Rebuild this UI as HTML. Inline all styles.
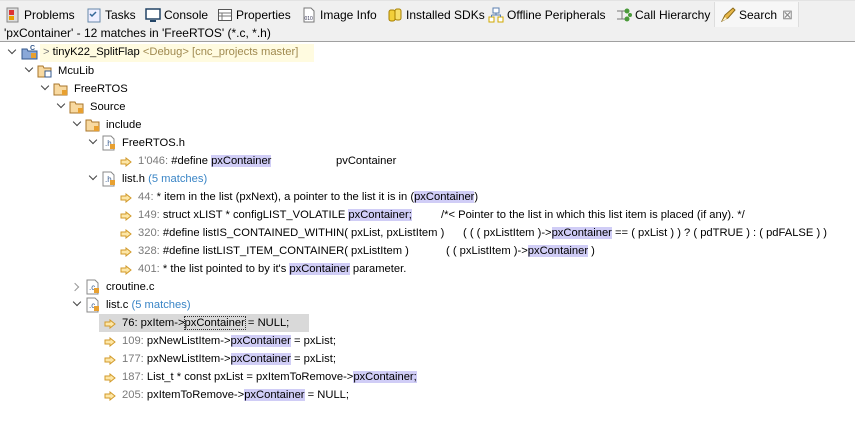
<!DOCTYPE html>
<html><head><meta charset="utf-8"><style>
*{margin:0;padding:0;box-sizing:border-box}
body{width:855px;height:426px;overflow:hidden;background:#fff;font-family:"Liberation Sans",sans-serif;font-size:12px;color:#000;position:relative}
.tabs{position:absolute;left:0;top:0;width:855px;height:28px;background:#f0f0f0;border-top:1px solid #e3e3e3}
.tab{position:absolute;top:5px;height:18px;line-height:18px;white-space:nowrap}
.tab svg{position:absolute;left:0;top:1px}
.tab span{position:absolute;left:19px}
.sel{position:absolute;left:714px;top:1px;width:85px;height:27px;background:#f7f7f7;border-left:1px solid #ddd;border-right:1px solid #ddd}
.status{position:absolute;left:0;top:27px;width:855px;height:15px;background:#f0f0f0;border-bottom:1px solid #a0a0a0;line-height:13px;padding-left:4px}
.r{position:absolute;height:18px;line-height:18px;white-space:nowrap;font-size:11.2px}
.t{position:absolute;white-space:nowrap;top:0}
.h{background:#d0cdf6}
.g{color:#7a7a7a}
.b{color:#3a85c6}
.chev{position:absolute;width:6px;height:6px;border-right:1.3px solid #444;border-bottom:1.3px solid #444}
.dn{transform:rotate(45deg)}
.rt{transform:rotate(-45deg);border-color:#999}
</style></head><body>
<div class="tabs">
<div class="sel"></div>
<div class="tab" style="left:5px"><svg width="16" height="16"><rect x="2" y="1" width="11" height="14" fill="#ddd" stroke="#888"/><rect x="4" y="3" width="5" height="5" fill="#d33"/><rect x="4" y="9" width="5" height="4" fill="#e8a000"/></svg><span>Problems</span></div>
<div class="tab" style="left:86px"><svg width="16" height="16"><rect x="2" y="2" width="12" height="13" fill="#eef" stroke="#68a"/><path d="M4 7l2 2 4-4" stroke="#369" fill="none" stroke-width="1.5"/></svg><span>Tasks</span></div>
<div class="tab" style="left:145px"><svg width="16" height="16"><rect x="1" y="2" width="14" height="10" fill="#fff" stroke="#246" stroke-width="1.5"/><rect x="5" y="13" width="6" height="2" fill="#246"/></svg><span>Console</span></div>
<div class="tab" style="left:217px"><svg width="16" height="16"><rect x="1.5" y="2.5" width="13" height="11" fill="#fff" stroke="#555"/><path d="M2 6h12M2 9h12M5 6v7" stroke="#777"/></svg><span>Properties</span></div>
<div class="tab" style="left:301px"><svg width="16" height="16"><path d="M3 1h7l3 3v11H3z" fill="#fff" stroke="#777"/><text x="3.5" y="13" font-size="5" fill="#335">010</text></svg><span>Image Info</span></div>
<div class="tab" style="left:387px"><svg width="16" height="16"><rect x="2" y="3" width="6" height="11" rx="2" fill="#f2cf3a" stroke="#a77f00"/><rect x="8" y="2" width="6" height="11" rx="2" fill="#f7df6a" stroke="#a77f00"/></svg><span>Installed SDKs</span></div>
<div class="tab" style="left:488px"><svg width="16" height="16"><rect x="5" y="1" width="6" height="5" fill="#fff" stroke="#5b7fb0"/><rect x="1" y="10" width="5" height="5" fill="#fff" stroke="#d1a800"/><rect x="10" y="10" width="5" height="5" fill="#fff" stroke="#d1a800"/><path d="M8 6v2M3.5 8h9v2M3.5 8v2" stroke="#5b7fb0" fill="none"/></svg><span>Offline Peripherals</span></div>
<div class="tab" style="left:616px"><svg width="16" height="16"><path d="M1 4h8M1 12h8M6 4v8" stroke="#777"/><circle cx="11" cy="4" r="2.5" fill="#4a9a3a"/><circle cx="11" cy="12" r="2.5" fill="#4a9a3a"/><circle cx="14" cy="8" r="2" fill="#4a9a3a"/></svg><span>Call Hierarchy</span></div>
<div class="tab" style="left:720px"><svg width="16" height="16"><path d="M2 14l3-6 8-7 2 2-7 8z" fill="#e8b84a" stroke="#8a6a1a"/><path d="M2 14l3-4 2 2z" fill="#fff5c8"/></svg><span>Search</span><span style="left:62px;color:#888;font-size:13px">⊠</span></div>
</div>
<div class="status">'pxContainer' - 12 matches in 'FreeRTOS' (*.c, *.h)</div>

<div style="position:absolute;left:40px;top:44px;width:274px;height:18px;background:#fffbe0"></div>
<div class="chev dn" style="left:9px;top:47px"></div>
<svg style="position:absolute;left:21px;top:44px" width="18" height="16"><path d="M1 5h5l1 2h9v8H1z" fill="#8aa8d8" stroke="#35598d"/><text x="9" y="6" font-size="7" font-weight="bold" fill="#35598d">C</text><rect x="10" y="9" width="5" height="5" fill="#e8a030"/></svg>
<div class="r" style="left:43px;top:43px"><span class="g">&gt; </span>tinyK22_SplitFlap <span style="color:#a08a50">&lt;Debug&gt; [cnc_projects master]</span></div>

<div class="chev dn" style="left:26px;top:65px"></div>
<svg style="position:absolute;left:37px;top:63px" width="16" height="16"><path d="M1 3h5l1 2h7v9H1z" fill="#f8d9a0" stroke="#a8752a"/><rect x="8" y="8" width="6" height="6" fill="#fff" stroke="#35598d"/></svg>
<div class="r" style="left:58px;top:62px">McuLib</div>

<div class="chev dn" style="left:42px;top:83px"></div>
<svg style="position:absolute;left:53px;top:81px" width="16" height="16"><path d="M1 3h5l1 2h7v9H1z" fill="#f8d9a0" stroke="#a8752a"/><rect x="9" y="9" width="5" height="5" fill="#e8a030"/></svg>
<div class="r" style="left:74px;top:80px">FreeRTOS</div>

<div class="chev dn" style="left:58px;top:101px"></div>
<svg style="position:absolute;left:69px;top:99px" width="16" height="16"><path d="M1 3h5l1 2h7v9H1z" fill="#f8d9a0" stroke="#a8752a"/><rect x="9" y="9" width="5" height="5" fill="#e8a030"/></svg>
<div class="r" style="left:90px;top:98px">Source</div>

<div class="chev dn" style="left:74px;top:119px"></div>
<svg style="position:absolute;left:85px;top:117px" width="16" height="16"><path d="M1 3h5l1 2h7v9H1z" fill="#f8d9a0" stroke="#a8752a"/><rect x="9" y="9" width="5" height="5" fill="#e8a030"/></svg>
<div class="r" style="left:106px;top:116px">include</div>

<div class="chev dn" style="left:90px;top:137px"></div>
<svg style="position:absolute;left:101px;top:135px" width="16" height="16"><path d="M2 1h8l3 3v11H2z" fill="#fff" stroke="#888"/><text x="4" y="11" font-size="8" fill="#35598d">.h</text><rect x="9" y="9" width="5" height="5" fill="#e8a030"/></svg>
<div class="r" style="left:122px;top:134px">FreeRTOS.h</div>

<div class="r" style="left:0;top:152px;width:855px">
<svg style="position:absolute;left:120px;top:5px" width="12" height="10"><path d="M1 3h5V1l5 4-5 4V7H1z" fill="#fde7a8" stroke="#d29a2a"/></svg>
<span class="t" style="left:138px"><span class="g">1'046: </span>#define <span class="h">pxContainer</span></span><span class="t" style="left:336px">pvContainer</span></div>

<div class="chev dn" style="left:90px;top:173px"></div>
<svg style="position:absolute;left:101px;top:171px" width="16" height="16"><path d="M2 1h8l3 3v11H2z" fill="#fff" stroke="#888"/><text x="4" y="11" font-size="8" fill="#35598d">.h</text><rect x="9" y="9" width="5" height="5" fill="#e8a030"/></svg>
<div class="r" style="left:122px;top:170px">list.h <span class="b">(5 matches)</span></div>

<div class="r" style="left:0;top:188px;width:855px"><svg style="position:absolute;left:120px;top:5px" width="12" height="10"><path d="M1 3h5V1l5 4-5 4V7H1z" fill="#fde7a8" stroke="#d29a2a"/></svg>
<span class="t" style="left:138px"><span class="g">44: </span>* item in the list (pxNext), a pointer to the list it is in (<span class="h">pxContainer</span>)</span></div>

<div class="r" style="left:0;top:206px;width:855px"><svg style="position:absolute;left:120px;top:5px" width="12" height="10"><path d="M1 3h5V1l5 4-5 4V7H1z" fill="#fde7a8" stroke="#d29a2a"/></svg>
<span class="t" style="left:138px"><span class="g">149: </span>struct xLIST * configLIST_VOLATILE <span class="h">pxContainer;</span></span><span class="t" style="left:441px">/*&lt; Pointer to the list in which this list item is placed (if any). */</span></div>

<div class="r" style="left:0;top:224px;width:855px"><svg style="position:absolute;left:120px;top:5px" width="12" height="10"><path d="M1 3h5V1l5 4-5 4V7H1z" fill="#fde7a8" stroke="#d29a2a"/></svg>
<span class="t" style="left:138px"><span class="g">320: </span>#define listIS_CONTAINED_WITHIN( pxList, pxListItem )</span><span class="t" style="left:463px">( ( ( pxListItem )-&gt;<span class="h">pxContainer</span> == ( pxList ) ) ? ( pdTRUE ) : ( pdFALSE ) )</span></div>

<div class="r" style="left:0;top:242px;width:855px"><svg style="position:absolute;left:120px;top:5px" width="12" height="10"><path d="M1 3h5V1l5 4-5 4V7H1z" fill="#fde7a8" stroke="#d29a2a"/></svg>
<span class="t" style="left:138px"><span class="g">328: </span>#define listLIST_ITEM_CONTAINER( pxListItem )</span><span class="t" style="left:446px">( ( pxListItem )-&gt;<span class="h">pxContainer</span> )</span></div>

<div class="r" style="left:0;top:260px;width:855px"><svg style="position:absolute;left:120px;top:5px" width="12" height="10"><path d="M1 3h5V1l5 4-5 4V7H1z" fill="#fde7a8" stroke="#d29a2a"/></svg>
<span class="t" style="left:138px"><span class="g">401: </span>* the list pointed to by it's <span class="h">pxContainer</span> parameter.</span></div>

<div class="chev rt" style="left:72px;top:284px"></div>
<svg style="position:absolute;left:85px;top:279px" width="16" height="16"><path d="M2 1h8l3 3v11H2z" fill="#fff" stroke="#888"/><text x="4" y="11" font-size="8" fill="#35598d">.c</text><rect x="9" y="9" width="5" height="5" fill="#e8a030"/></svg>
<div class="r" style="left:106px;top:278px">croutine.c</div>

<div class="chev dn" style="left:74px;top:299px"></div>
<svg style="position:absolute;left:85px;top:297px" width="16" height="16"><path d="M2 1h8l3 3v11H2z" fill="#fff" stroke="#888"/><text x="4" y="11" font-size="8" fill="#35598d">.c</text><rect x="9" y="9" width="5" height="5" fill="#e8a030"/></svg>
<div class="r" style="left:106px;top:296px">list.c <span class="b">(5 matches)</span></div>

<div class="r" style="left:99px;top:314px;width:210px;background:#d9d9d9"></div>
<div class="r" style="left:0;top:314px;width:855px"><svg style="position:absolute;left:104px;top:5px" width="12" height="10"><path d="M1 3h5V1l5 4-5 4V7H1z" fill="#fde7a8" stroke="#d29a2a"/></svg>
<span class="t" style="left:122px">76: pxItem-&gt;<span style="outline:1px dotted #333">pxContainer</span> = NULL;</span></div>

<div class="r" style="left:0;top:332px;width:855px"><svg style="position:absolute;left:104px;top:5px" width="12" height="10"><path d="M1 3h5V1l5 4-5 4V7H1z" fill="#fde7a8" stroke="#d29a2a"/></svg>
<span class="t" style="left:122px"><span class="g">109: </span>pxNewListItem-&gt;<span class="h">pxContainer</span> = pxList;</span></div>

<div class="r" style="left:0;top:350px;width:855px"><svg style="position:absolute;left:104px;top:5px" width="12" height="10"><path d="M1 3h5V1l5 4-5 4V7H1z" fill="#fde7a8" stroke="#d29a2a"/></svg>
<span class="t" style="left:122px"><span class="g">177: </span>pxNewListItem-&gt;<span class="h">pxContainer</span> = pxList;</span></div>

<div class="r" style="left:0;top:368px;width:855px"><svg style="position:absolute;left:104px;top:5px" width="12" height="10"><path d="M1 3h5V1l5 4-5 4V7H1z" fill="#fde7a8" stroke="#d29a2a"/></svg>
<span class="t" style="left:122px"><span class="g">187: </span>List_t * const pxList = pxItemToRemove-&gt;<span class="h">pxContainer;</span></span></div>

<div class="r" style="left:0;top:386px;width:855px"><svg style="position:absolute;left:104px;top:5px" width="12" height="10"><path d="M1 3h5V1l5 4-5 4V7H1z" fill="#fde7a8" stroke="#d29a2a"/></svg>
<span class="t" style="left:122px"><span class="g">205: </span>pxItemToRemove-&gt;<span class="h">pxContainer</span> = NULL;</span></div>
</body></html>
